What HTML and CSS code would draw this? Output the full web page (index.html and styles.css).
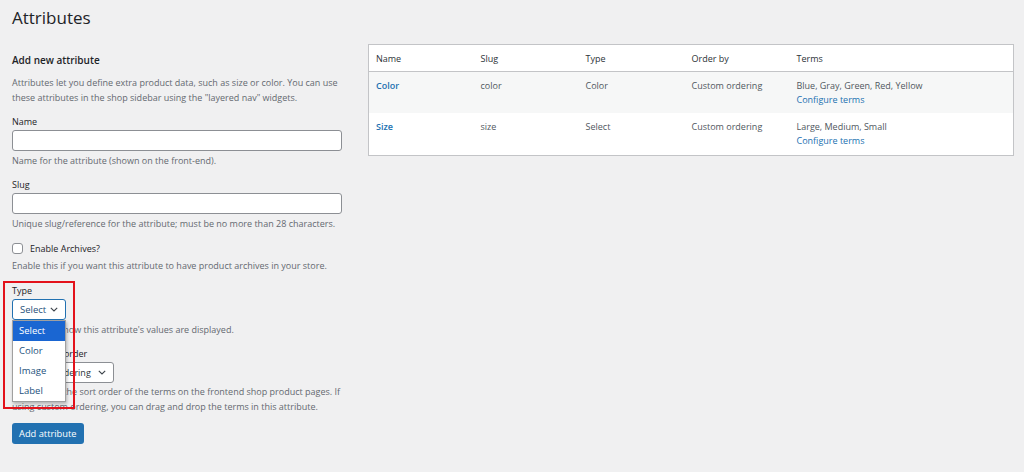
FILE: index.html
```html
<!DOCTYPE html>
<html lang="en">
<head>
<meta charset="utf-8">
<title>Attributes</title>
<link rel="stylesheet" href="styles.css">
</head>
<body>
<div class="page">
  <h1 class="title">Attributes</h1>
  <div class="cols">
    <div class="form-col">
      <h2 class="form-title">Add new attribute</h2>
      <p class="intro">Attributes let you define extra product data, such as size or color. You can use<br>these attributes in the shop sidebar using the "layered nav" widgets.</p>

      <div class="field f-name">
        <div class="lbl">Name</div>
        <div class="input"></div>
        <p class="help">Name for the attribute (shown on the front-end).</p>
      </div>

      <div class="field f-slug">
        <div class="lbl">Slug</div>
        <div class="input"></div>
        <p class="help">Unique slug/reference for the attribute; must be no more than 28 characters.</p>
      </div>

      <div class="field f-archive">
        <div class="check-row"><span class="checkbox"></span><span class="check-lbl">Enable Archives?</span></div>
        <p class="help">Enable this if you want this attribute to have product archives in your store.</p>
      </div>

      <div class="field f-type">
        <div class="lbl">Type</div>
        <div class="select sel-type"><span>Select</span><svg class="chev" width="8" height="5" viewBox="0 0 8 5"><path d="M0.8 0.8L4 4L7.2 0.8" fill="none" stroke="#3c434a" stroke-width="1.1"/></svg></div>
        <p class="help">Determines how this attribute's values are displayed.</p>
        <div class="dropdown">
          <div class="opt active">Select</div>
          <div class="opt">Color</div>
          <div class="opt">Image</div>
          <div class="opt">Label</div>
        </div>
        <div class="highlight"></div>
      </div>

      <div class="field f-order">
        <div class="lbl">Default sort order</div>
        <div class="select sel-order"><span>Custom ordering</span><svg class="chev" width="8" height="5" viewBox="0 0 8 5"><path d="M0.8 0.8L4 4L7.2 0.8" fill="none" stroke="#3c434a" stroke-width="1.1"/></svg></div>
        <p class="help">Determines the sort order of the terms on the frontend shop product pages. If<br>using custom ordering, you can drag and drop the terms in this attribute.</p>
      </div>

      <div class="btn">Add attribute</div>
    </div>

    <div class="table-col">
      <table class="attr-table">
        <colgroup>
          <col class="c1"><col class="c2"><col class="c3"><col class="c4"><col class="c5">
        </colgroup>
        <thead>
          <tr><th>Name</th><th>Slug</th><th>Type</th><th>Order by</th><th>Terms</th></tr>
        </thead>
        <tbody>
          <tr class="alt">
            <td><a class="name-link">Color</a></td>
            <td>color</td>
            <td>Color</td>
            <td>Custom ordering</td>
            <td>Blue, Gray, Green, Red, Yellow<br><a class="cfg">Configure terms</a></td>
          </tr>
          <tr>
            <td><a class="name-link">Size</a></td>
            <td>size</td>
            <td>Select</td>
            <td>Custom ordering</td>
            <td>Large, Medium, Small<br><a class="cfg">Configure terms</a></td>
          </tr>
        </tbody>
      </table>
    </div>
  </div>
</div>
</body>
</html>
```

FILE: styles.css
```css
html, body {
  margin: 0;
  padding: 0;
  background: #f0f0f1;
}
body {
  font-family: "Open Sans", "Noto Sans", sans-serif;
  font-size: 9px;
  color: #3c434a;
}
.page {
  padding: 0 10px 0 12px;
}
.title {
  margin: 6px 0 0;
  font-size: 17px;
  line-height: 23px;
  font-weight: 400;
  color: #1d2327;
}
.cols {
  display: flex;
  gap: 26px;
  margin-top: 15px;
  align-items: flex-start;
}
.form-col {
  width: 330px;
  flex: none;
  padding-top: 9px;
}
.form-title {
  margin: 0;
  font-size: 10px;
  line-height: 15px;
  font-weight: 600;
  color: #1d2327;
}
.intro {
  margin: 7px 0 0;
  line-height: 15px;
  color: #646970;
  white-space: nowrap;
}
.field {
  position: relative;
  margin-top: 9px;
}
.f-archive { margin-top: 10px; }
.f-type { margin-top: 10px; z-index: 5; }
.f-order { margin-top: 9px; }
.lbl {
  line-height: 15px;
  color: #1d2327;
}
.input {
  margin-top: 1px;
  height: 19px;
  border: 1px solid #8c8f94;
  border-radius: 3px;
  background: #fff;
}
.help {
  margin: 2px 0 0;
  line-height: 15px;
  color: #646970;
  white-space: nowrap;
}
.check-row {
  display: flex;
  align-items: center;
  height: 15px;
  gap: 7px;
}
.checkbox {
  width: 9px;
  height: 9px;
  border: 1px solid #8c8f94;
  border-radius: 3px;
  background: #fff;
}
.check-lbl {
  color: #1d2327;
}
.select {
  margin-top: 1px;
  height: 19px;
  box-sizing: content-box;
  border: 1px solid #8c8f94;
  border-radius: 3px;
  background: #fff;
  display: flex;
  align-items: center;
  justify-content: space-between;
  padding: 0 7px 0 7px;
  color: #2c3338;
}
.sel-type {
  width: 38px;
  border-color: #2271b1;
  color: #1f4f7a;
  font-size: 9.5px;
}
.sel-order {
  width: 86px;
}
.chev {
  flex: none;
}
.f-type .help { margin-top: 2px; }
.f-order .help { margin-top: 1px; }
.dropdown {
  position: absolute;
  top: 37px;
  left: 0;
  width: 52px;
  background: #fff;
  border: 1px solid #a0a0a0;
  box-shadow: 1px 2px 3px rgba(0,0,0,0.25);
  font-size: 9.5px;
}
.opt {
  height: 20px;
  line-height: 20px;
  padding-left: 6px;
  color: #24527d;
}
.opt.active {
  background: #1a66d2;
  color: #fff;
}
.highlight {
  position: absolute;
  top: -2px;
  left: -9px;
  width: 68px;
  height: 124px;
  border: 2px solid #e3121b;
}
.btn {
  margin-top: 9px;
  display: inline-block;
  height: 21px;
  line-height: 21px;
  padding: 0 7px;
  background: #2271b1;
  color: #fff;
  border-radius: 3px;
  font-size: 9.3px;
}
.table-col {
  flex: 1;
}
.attr-table {
  width: 100%;
  table-layout: fixed;
  border-collapse: collapse;
  background: #fff;
  border: 1px solid #c3c4c7;
}
.c1, .c2, .c4 { width: 105px; }
.c3 { width: 106px; }
.attr-table th {
  text-align: left;
  font-weight: 400;
  color: #2c3338;
  padding: 7px 7px 5px;
  line-height: 14px;
  border-bottom: 1px solid #c3c4c7;
}
.attr-table td {
  vertical-align: top;
  padding: 7px 7px 6px;
  line-height: 14px;
  height: 28px;
  color: #50575e;
}
.attr-table tr.alt td {
  background: #f6f7f7;
}
.attr-table tbody tr:last-child td {
  padding-bottom: 7px;
}
.name-link {
  color: #2271b1;
  font-weight: 600;
}
.cfg {
  color: #2271b1;
}
```
